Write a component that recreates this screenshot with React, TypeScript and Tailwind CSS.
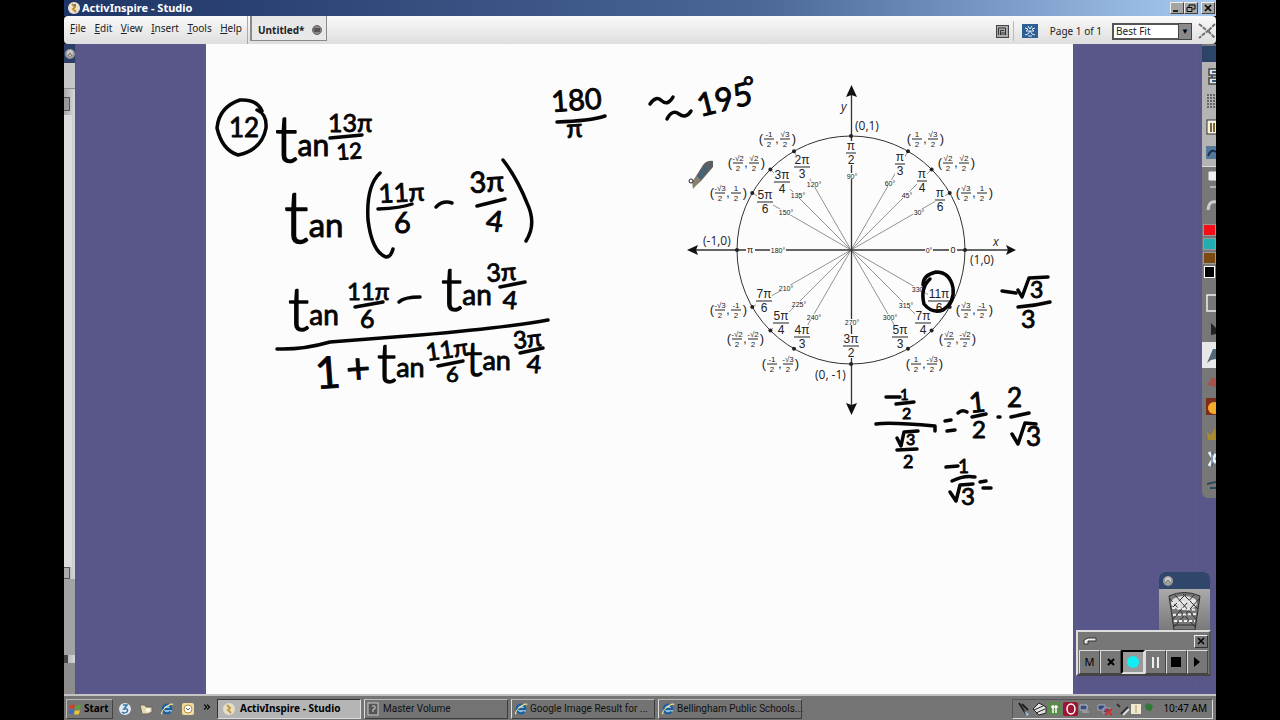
import type { ReactNode } from "react";
import { ChevronsRight } from "lucide-react";

type Glyph = { x: number; y: number; size: number; text: string; turn?: number };
type Fraction = { x: number; y: number; top: string; bottom: string };

const menus = ["File", "Edit", "View", "Insert", "Tools", "Help"];

// centre of the unit circle and its radius on the page
const CX = 851;
const CY = 250;
const R = 114;

const spokes = [30, 45, 60, 120, 135, 150, 210, 225, 240, 300, 315, 330];
const dots = [0, 90, 180, 270, ...spokes];

const degrees = [
  { x: 919, y: 212, text: "30°" },
  { x: 907, y: 195, text: "45°" },
  { x: 890, y: 183, text: "60°" },
  { x: 852, y: 176, text: "90°" },
  { x: 814, y: 184, text: "120°" },
  { x: 798, y: 195, text: "135°" },
  { x: 786, y: 212, text: "150°" },
  { x: 778, y: 250, text: "180°" },
  { x: 786, y: 288, text: "210°" },
  { x: 799, y: 304, text: "225°" },
  { x: 814, y: 317, text: "240°" },
  { x: 852, y: 322, text: "270°" },
  { x: 890, y: 317, text: "300°" },
  { x: 906, y: 305, text: "315°" },
  { x: 919, y: 289, text: "330°" },
  { x: 929, y: 250, text: "0°" },
];

const radians: Fraction[] = [
  { x: 940, y: 200, top: "π", bottom: "6" },
  { x: 922, y: 181, top: "π", bottom: "4" },
  { x: 900, y: 164, top: "π", bottom: "3" },
  { x: 851, y: 153, top: "π", bottom: "2" },
  { x: 802, y: 167, top: "2π", bottom: "3" },
  { x: 782, y: 182, top: "3π", bottom: "4" },
  { x: 765, y: 202, top: "5π", bottom: "6" },
  { x: 764, y: 301, top: "7π", bottom: "6" },
  { x: 781, y: 323, top: "5π", bottom: "4" },
  { x: 802, y: 337, top: "4π", bottom: "3" },
  { x: 851, y: 346, top: "3π", bottom: "2" },
  { x: 900, y: 337, top: "5π", bottom: "3" },
  { x: 923, y: 323, top: "7π", bottom: "4" },
  { x: 939, y: 301, top: "11π", bottom: "6" },
];

const points = [
  { x: 925, y: 139, a: "1", b: "√3" },
  { x: 956, y: 163, a: "√2", b: "√2" },
  { x: 974, y: 193, a: "√3", b: "1" },
  { x: 777, y: 139, a: "-1", b: "√3" },
  { x: 746, y: 163, a: "-√2", b: "√2" },
  { x: 728, y: 193, a: "-√3", b: "1" },
  { x: 728, y: 310, a: "-√3", b: "-1" },
  { x: 745, y: 339, a: "-√2", b: "-√2" },
  { x: 780, y: 364, a: "-1", b: "-√3" },
  { x: 924, y: 364, a: "1", b: "-√3" },
  { x: 957, y: 339, a: "√2", b: "-√2" },
  { x: 974, y: 310, a: "√3", b: "-1" },
];

const ink: Glyph[] = [
  { x: 229, y: 137, size: 26, text: "12" },
  { x: 328, y: 132, size: 25, text: "13π" },
  { x: 337, y: 160, size: 22, text: "12", turn: -4 },
  { x: 379, y: 203, size: 26, text: "11π", turn: -3 },
  { x: 394, y: 233, size: 29, text: "6" },
  { x: 470, y: 193, size: 29, text: "3π", turn: -3 },
  { x: 485, y: 230, size: 29, text: "4", turn: 8 },
  { x: 347, y: 300, size: 24, text: "11π" },
  { x: 360, y: 328, size: 25, text: "6" },
  { x: 487, y: 282, size: 25, text: "3π", turn: -4 },
  { x: 502, y: 308, size: 25, text: "4", turn: 6 },
  { x: 316, y: 389, size: 44, text: "1", turn: -4 },
  { x: 347, y: 384, size: 42, text: "+", turn: -4 },
  { x: 427, y: 361, size: 24, text: "11π", turn: -8 },
  { x: 446, y: 382, size: 22, text: "6" },
  { x: 514, y: 349, size: 24, text: "3π", turn: -6 },
  { x: 526, y: 372, size: 25, text: "4", turn: 6 },
  { x: 552, y: 112, size: 29, text: "180", turn: -4 },
  { x: 567, y: 138, size: 26, text: "π", turn: -4 },
  { x: 700, y: 117, size: 32, text: "195", turn: -14 },
  { x: 743, y: 96, size: 26, text: "°" },
  { x: 1030, y: 298, size: 23, text: "3" },
  { x: 1021, y: 328, size: 25, text: "3" },
  { x: 900, y: 400, size: 15, text: "1" },
  { x: 902, y: 419, size: 16, text: "2" },
  { x: 906, y: 445, size: 16, text: "3" },
  { x: 903, y: 468, size: 18, text: "2" },
  { x: 970, y: 413, size: 28, text: "1", turn: -6 },
  { x: 972, y: 438, size: 24, text: "2" },
  { x: 1007, y: 407, size: 26, text: "2" },
  { x: 1026, y: 446, size: 26, text: "3" },
  { x: 958, y: 473, size: 19, text: "1" },
  { x: 961, y: 505, size: 24, text: "3" },
];

// bars, brackets, radicals and the rings drawn with the pen
const strokes = [
  "M262 111 Q257 99 240 100 Q219 107 217 128 Q222 150 238 155 Q262 150 266 128 Q267 114 257 110",
  "M330 138 L362 135",
  "M380 173 Q366 186 368 220 Q372 252 386 257 Q391 257 393 249",
  "M503 160 Q517 178 527 203 Q537 224 526 241",
  "M378 209 Q402 208 412 204",
  "M436 207 Q443 200 452 203",
  "M477 206 L505 199",
  "M399 302 Q404 297 420 297",
  "M355 307 L383 302",
  "M500 287 L525 282",
  "M277 349 Q302 350 330 342 L420 335 Q510 327 548 320",
  "M438 366 L463 361",
  "M520 353 L543 348",
  "M557 122 Q590 121 605 116",
  "M650 104 Q656 95 662 101 Q668 106 673 97",
  "M667 119 Q672 109 679 114 Q686 119 691 111",
  "M1002 291 L1016 293",
  "M1018 290 L1022 297 L1029 278 L1048 277",
  "M1018 307 Q1034 306 1050 302",
  "M886 397 L900 397",
  "M896 404 L914 402",
  "M876 424 Q890 422 935 426 V431",
  "M897 438 L901 446 L904 432 L918 431",
  "M897 450 L917 449",
  "M945 421 L951 420 M947 431 L955 430",
  "M958 413 Q962 409 967 412",
  "M972 417 L986 414",
  "M998 417 H1000",
  "M1011 417 L1029 413",
  "M1012 434 L1018 444 L1025 423 L1036 424",
  "M946 467 L958 466",
  "M952 481 Q964 475 975 477",
  "M950 492 L956 501 L960 485 L973 484",
  "M980 482 L986 481 M983 488 L991 488",
  "M930 279 Q920 288 924 304 Q932 314 943 310 Q955 302 953 288 Q950 272 936 272 Q923 275 923 285",
];

const tans = [
  { x: 275, y: 156, size: 30, tall: 66 },
  { x: 284, y: 237, size: 33, tall: 72 },
  { x: 288, y: 325, size: 28, tall: 62 },
  { x: 441, y: 305, size: 28, tall: 62 },
  { x: 377, y: 377, size: 27, tall: 56 },
  { x: 466, y: 370, size: 27, tall: 48 },
];

function CircleFraction({ x, y, top, bottom }: Fraction) {
  const half = top.length * 3 + 2;
  return (
    <g fontSize={12} textAnchor="middle">
      <rect x={x - half} y={y - 12} width={half * 2} height={24} fill="#fdfcfd" />
      <text x={x} y={y - 3}>{top}</text>
      <line x1={x - half} x2={x + half} y1={y} y2={y} stroke="#222" />
      <text x={x} y={y + 11}>{bottom}</text>
    </g>
  );
}

function PointLabel({ x, y, a, b }: { x: number; y: number; a: string; b: string }) {
  return (
    <g textAnchor="middle" fontSize={8}>
      <text x={x - 16} y={y + 4} fontSize={13}>(</text>
      <text x={x - 8} y={y - 2}>{a}</text>
      <line x1={x - 13} x2={x - 3} y1={y} y2={y} stroke="#222" />
      <text x={x - 8} y={y + 8}>2</text>
      <text x={x} y={y + 4} fontSize={12}>,</text>
      <text x={x + 8} y={y - 2}>{b}</text>
      <line x1={x + 3} x2={x + 13} y1={y} y2={y} stroke="#222" />
      <text x={x + 8} y={y + 8}>2</text>
      <text x={x + 17} y={y + 4} fontSize={13}>)</text>
    </g>
  );
}

function onCircle(deg: number) {
  const rad = (deg * Math.PI) / 180;
  return { x: CX + R * Math.cos(rad), y: CY - R * Math.sin(rad) };
}

function UnitCircle() {
  return (
    <g className="font-['Liberation_Sans','DejaVu_Sans',sans-serif]" fill="#222">
      {spokes.map((deg) => {
        const p = onCircle(deg);
        return <line key={deg} x1={CX} y1={CY} x2={p.x} y2={p.y} stroke="#777" strokeWidth={0.8} />;
      })}
      <path d="M696 250 H1008 M851.500 94 V406" stroke="#333" strokeWidth={1.3} fill="none" />
      <path d="M687 250 L698 245 L696 250 L698 255 Z M1016 250 L1006 245 L1008 250 L1006 255 Z M851.500 85 L846 97 L851.500 95 L857 97 Z M851.500 415 L846 403 L851.500 405 L857 403 Z" fill="#111" />
      {radians.map((r) => (
        <CircleFraction key={`${r.x}-${r.y}`} {...r} />
      ))}
      {degrees.map((d) => (
        <g key={d.text} fontSize={7} textAnchor="middle">
          <rect x={d.x - d.text.length * 2} y={d.y - 3} width={d.text.length * 4} height={6} fill="#fdfcfd" />
          <text x={d.x} y={d.y + 3}>{d.text}</text>
        </g>
      ))}
      <circle cx={CX} cy={CY} r={R} fill="none" stroke="#333" />
      {dots.map((deg) => {
        const p = onCircle(deg);
        return <circle key={deg} cx={p.x} cy={p.y} r={2} />;
      })}
      {points.map((p) => (
        <PointLabel key={`${p.x}-${p.y}`} {...p} />
      ))}
      <g fontSize={9} textAnchor="middle">
        <rect x={746} y={246} width={9} height={8} fill="#fdfcfd" />
        <text x={750} y={253}>π</text>
        <rect x={949} y={246} width={8} height={8} fill="#fdfcfd" />
        <text x={953} y={253}>0</text>
      </g>
      <g fontSize={12} className="font-['Open_Sans',sans-serif]">
        <text x={855} y={130}>(0,1)</text>
        <text x={703} y={245}>(-1,0)</text>
        <text x={970} y={264}>(1,0)</text>
        <text x={815} y={379}>(0, -1)</text>
        <text x={841} y={111} fontStyle="italic">y</text>
        <text x={993} y={246} fontStyle="italic">x</text>
      </g>
    </g>
  );
}

function Flipchart() {
  return (
    <svg viewBox="206 44 867 650" className="block w-full bg-[#fdfcfd]" role="img" aria-label="Flipchart page">
      <UnitCircle />
      <g
        className="font-['Lato','DejaVu_Sans',sans-serif]"
        fill="#050505"
        stroke="#050505"
        strokeWidth={0.9}
        strokeLinejoin="round"
      >
        {tans.map((t) => (
          <text key={`${t.x}-${t.y}`} x={t.x} y={t.y + 6} fontSize={t.size}>
            <tspan fontSize={t.tall} fontWeight={300} strokeWidth={1.6}>t</tspan>
            <tspan dy={-6}>an</tspan>
          </text>
        ))}
        {ink.map((g) => (
          <text
            key={`${g.x}-${g.y}`}
            x={g.x}
            y={g.y}
            fontSize={g.size}
            transform={g.turn ? `rotate(${g.turn} ${g.x} ${g.y})` : undefined}
          >
            {g.text}
          </text>
        ))}
      </g>
      <g fill="none" stroke="#050505" strokeWidth={3.5} strokeLinecap="round" strokeLinejoin="round">
        {strokes.map((d) => (
          <path key={d} d={d} />
        ))}
      </g>
      {/* pen cursor */}
      <path d="M693 188 L693 181 L703 165 Q707 160 713 161 L713 167 L701 181 Z" fill="#5c5e60" />
      <path d="M693 189 L692 182 L697 176 L701 180 Z" fill="#8a8270" />
      <path d="M699 178 L706 167" stroke="#3b6580" strokeWidth={3} />
      <circle cx={691} cy={181} r={2} fill="#fff" stroke="#222" />
    </svg>
  );
}

function WindowButton({ label, children }: { label: string; children: ReactNode }) {
  return (
    <button
      aria-label={label}
      className="flex h-3 w-[14px] items-center justify-center border border-t-[#eee] border-r-[#444] border-b-[#444] border-l-[#eee] bg-[#a5a5a5]"
    >
      <svg viewBox="0 0 10 8" className="h-2 w-[10px]" fill="none" stroke="#000" strokeWidth={1.6}>
        {children}
      </svg>
    </button>
  );
}

function RoundPin() {
  return (
    <svg viewBox="0 0 12 12" className="size-3 shrink-0">
      <circle cx={6} cy={6} r={5} fill="#9b9b9b" />
      <circle cx={6} cy={5} r={3} fill="#c9c9c9" />
      <path d="M4 8 L6 5 L8 8" stroke="#666" fill="none" />
    </svg>
  );
}

function TitleBar() {
  return (
    <header className="flex h-4 items-center bg-linear-to-r from-[#1f3566] via-[#4a6796] via-60% to-[#a9cbf2] pr-px pl-[3px]">
      <svg viewBox="0 0 14 14" className="mr-px size-[14px]">
        <circle cx={7} cy={7} r={6} fill="#e9e4d4" />
        <path d="M5 3 L8 6 L6 8 L9 11" stroke="#c98a2c" strokeWidth={2} fill="none" />
        <circle cx={8} cy={4} r={1} fill="#555" />
      </svg>
      <h1 className="text-[11px] leading-4 font-bold text-white">ActivInspire - Studio</h1>
      <div className="ml-auto flex">
        <WindowButton label="Minimize">
          <path d="M1 7 H6" />
        </WindowButton>
        <WindowButton label="Restore">
          <path d="M3 3 V1 H9 V5 H7 M1 3.500 H6 V7.500 H1 Z" strokeWidth={1} />
        </WindowButton>
        <span className="w-[3px]" />
        <WindowButton label="Close">
          <path d="M2 1 L8 7 M8 1 L2 7" />
        </WindowButton>
      </div>
    </header>
  );
}

function MenuBar() {
  return (
    <div className="flex h-7 items-stretch rounded-sm bg-linear-to-b from-[#fafafa] to-[#dedede] text-[#222]">
      <nav className="flex w-[184px] items-start justify-between border-r border-[#aaa] pt-1 pr-[5px] pl-[6px]">
        {menus.map((m) => (
          <button key={m} className="text-[10px] leading-4">
            <span className="underline">{m[0]}</span>
            {m.slice(1)}
          </button>
        ))}
      </nav>
      <div className="ml-[2px] flex h-[25px] w-[77px] items-center justify-between border-r border-b border-l-2 border-[#8a8a8a] bg-[#e8e8e8] pt-1 pr-1 pl-[6px] text-[10px] font-bold">
        <span>Untitled*</span>
        <button aria-label="Close Untitled" className="flex size-[10px] items-center justify-center rounded-full border border-[#666] bg-[#888]">
          <span className="h-1 w-[6px] bg-[#555]" />
        </button>
      </div>
      <div className="ml-auto flex items-center pt-[2px] text-[10px]">
        <button aria-label="Notes" className="flex size-[13px] items-center justify-center border border-[#444] bg-[#aaa]">
          <svg viewBox="0 0 10 10" className="size-[10px]" fill="none" stroke="#333">
            <path d="M1.500 9 V2 H8.500 V9 M3.500 9 V4.500 H7 M5 6 V9 M7 6 V9" />
          </svg>
        </button>
        <span className="mx-1 h-5 w-px bg-[#bbb]" />
        <button aria-label="Desktop annotate" className="ml-1 flex h-[14px] w-4 items-center justify-center bg-[#2d5e94]">
          <svg viewBox="0 0 14 12" className="h-3 w-[14px]" fill="none" stroke="#e0edf7">
            <path d="M2 3 L5 4 L3 6 H11 L9 4 L12 3 M2 10 L5 9 L7 6 L9 9 L12 10 M5 1 L7 4 L9 1 M5 11 H9" />
          </svg>
        </button>
        <span className="mr-[10px] ml-3">Page 1 of 1</span>
        <select
          aria-label="Zoom"
          defaultValue="Best Fit"
          className="h-[17px] w-[66px] appearance-none border-2 border-r-0 border-[#555] bg-white pl-[2px] text-[10px] leading-3"
        >
          <option>Best Fit</option>
        </select>
        <span className="flex h-[17px] w-[14px] items-center justify-center border border-[#444] bg-[#8a8a8a] text-[8px] text-black">▼</span>
        <button aria-label="Collapse" className="ml-[6px]">
          <svg viewBox="0 0 18 16" className="h-4 w-[18px]" fill="none" stroke="#707070" strokeWidth={2}>
            <path d="M1 1 L7 6 L10 8 L7 10 L1 15" strokeDasharray="4 1" />
            <path d="M17 1 L12 6 L10 8 L12 10 L17 15" strokeDasharray="4 1" />
          </svg>
        </button>
      </div>
    </div>
  );
}

function LeftTools() {
  return (
    <aside className="flex w-3 flex-col border-r border-[#55577c] bg-linear-to-r from-[#a9a9a9] to-[#d8d8d8]">
      <div className="flex h-[19px] items-center bg-[#2c3f66]">
        <RoundPin />
      </div>
      <div className="h-[26px] border-b border-[#8e8e8e] bg-[#c6c6c6]" />
      <button aria-label="Page browser" className="mt-2 h-[14px] w-[6px] border border-l-0 border-[#555] bg-[#999]" />
      <div className="mt-1 w-2 flex-1 bg-[#dcdcdc]" />
      <button aria-label="Scroll down" className="h-3 w-[6px] border border-l-0 border-[#555] bg-[#aaa]" />
      <div className="h-[76px] bg-[#a3a3a3]" />
      <div className="h-2 w-1 bg-[#444]" />
      <div className="h-[31px] bg-[#8d8d8d]" />
    </aside>
  );
}

function ToolButton({ label, children }: { label: string; children: ReactNode }) {
  return (
    <button aria-label={label} className="flex h-[26px] w-[14px] items-center overflow-hidden pl-1">
      <svg viewBox="0 0 10 20" className="h-5 w-[10px] shrink-0">{children}</svg>
    </button>
  );
}

function RightTools() {
  return (
    <aside className="flex w-[14px] flex-col self-start rounded-bl-md bg-[#777]">
      <div className="mt-[2px] h-4 bg-[#2c4468]" />
      <div className="flex flex-col border-b border-[#ddd] bg-[#b4b4b4]">
        <ToolButton label="Switch profile">
          <path d="M10 4 H3 V10 H10 M10 13 H3 V19 H10" fill="#e8e8e8" stroke="#444" strokeWidth={1.5} />
          <path d="M6 7 H10 M6 16 H10 M6 10 V13" stroke="#3c5675" strokeWidth={2} />
        </ToolButton>
        <ToolButton label="Keyboard">
          <path d="M1 4 H10 M1 7 H10 M1 10 H10 M1 13 H10 M1 16 H10" stroke="#666" strokeWidth={2} strokeDasharray="2 1" />
        </ToolButton>
        <ToolButton label="Users">
          <rect x={1} y={3} width={10} height={14} fill="#f5f2e6" stroke="#333" />
          <path d="M5 6 V15 M8 6 V15" stroke="#7b6430" strokeWidth={2} />
        </ToolButton>
        <ToolButton label="Desktop">
          <rect y={3} width={12} height={13} fill="#54799b" />
          <path d="M2 13 Q5 5 10 9" stroke="#16324c" strokeWidth={2} fill="none" />
        </ToolButton>
      </div>
      <ToolButton label="Copy">
        <path d="M3 2 H10 V10 H3 Z M4 17 H10" fill="#eee" stroke="#eee" />
      </ToolButton>
      <ToolButton label="Undo">
        <path d="M2 14 Q3 4 10 6" stroke="#ccc" strokeWidth={3} fill="none" />
      </ToolButton>
      <div className="mt-[5px] flex flex-col gap-[2px] pl-px">
        <button aria-label="Red" className="h-3 w-[13px] border border-[#999] bg-[#f40f18]" />
        <button aria-label="Teal" className="h-3 w-[13px] border border-[#999] bg-[#23adb3]" />
        <button aria-label="Brown" className="h-3 w-[13px] border border-[#999] bg-[#7b4a12]" />
        <button aria-label="Black" className="ml-px h-3 w-[11px] border border-white bg-black" />
      </div>
      <div className="mt-3 flex flex-col">
        <ToolButton label="Pen width">
          <path d="M10 2 H1 V18 H10" fill="#777" stroke="#eee" strokeWidth={1.5} />
        </ToolButton>
        <ToolButton label="Select">
          <path d="M5 4 L10 9 V15 L5 16 Z" fill="#222" />
        </ToolButton>
        <button aria-label="Pen" className="flex h-[26px] items-center bg-[#e8e8e8] pl-1">
          <svg viewBox="0 0 10 20" className="h-5 w-[10px]">
            <path d="M1 18 L7 4 H10 V14 L5 15 Z" fill="#50687a" />
          </svg>
        </button>
        <ToolButton label="Highlighter">
          <path d="M1 14 L6 6 L10 8 V16 Z" fill="#a4544c" />
        </ToolButton>
        <ToolButton label="Fill">
          <rect y={1} width={10} height={17} fill="#7d2e1b" />
          <circle cx={8} cy={11} r={6} fill="#f4ab2a" />
        </ToolButton>
        <ToolButton label="Clear">
          <path d="M1 9 L5 12 L9 5 L10 17 H2 Z" fill="#a98a31" />
        </ToolButton>
        <ToolButton label="Text">
          <path d="M3 3 L10 14 M3 17 L10 5" stroke="#e4eef5" strokeWidth={3} />
          <path d="M6 3 V17" stroke="#284a66" />
        </ToolButton>
        <ToolButton label="Connector">
          <path d="M1 9 L10 7 M4 13 H10" stroke="#2c4a5e" strokeWidth={2} />
        </ToolButton>
      </div>
    </aside>
  );
}

function TrashWindow() {
  return (
    <div className="absolute right-[6px] bottom-[62px] w-[51px] rounded-t-md bg-[#8c8c8c]">
      <div className="flex h-[17px] items-center rounded-t-md bg-[#30466b] pl-[3px]">
        <RoundPin />
      </div>
      <svg viewBox="0 0 51 43" className="block w-full bg-linear-to-b from-[#aaa] to-[#777]">
        <path d="M10 7 Q25 0 41 7 L36 41 H15 Z" fill="#777" stroke="#2e2e2e" />
        <ellipse cx={25} cy={14} rx={13} ry={7} fill="#ddd" />
        <path
          d="M11 10 L36 38 M16 6 L37 30 M24 5 L39 20 M40 10 L15 38 M35 6 L14 30 M27 5 L12 20 M14 36 H37"
          stroke="#333"
          fill="none"
        />
        <path d="M13 14 L38 12 M13 19 L38 21 M14 26 L37 25 M15 32 H36" stroke="#eee" strokeWidth={2} strokeDasharray="3 2" />
      </svg>
    </div>
  );
}

function Recorder() {
  const cell = "flex h-6 flex-1 items-center justify-center border border-t-[#ddd] border-r-[#444] border-b-[#444] border-l-[#ddd] bg-[#777]";
  return (
    <div className="absolute right-[5px] bottom-[18px] w-[135px] border-2 border-t-[#ddd] border-r-[#555] border-b-[#444] border-l-[#ddd] bg-[#777] px-px">
      <div className="flex h-[18px] items-center justify-between pl-1">
        <svg viewBox="0 0 14 8" className="h-2 w-[14px]">
          <path d="M1 3 L5 1 H13 V4 H5 V7 H1 Z" fill="#eee" stroke="#333" />
        </svg>
        <button aria-label="Close recorder" className="flex h-[13px] w-[14px] items-center justify-center border border-t-[#eee] border-r-[#333] border-b-[#333] border-l-[#eee]">
          <svg viewBox="0 0 8 8" className="size-2" stroke="#000" strokeWidth={1.5}>
            <path d="M1 1 L7 7 M7 1 L1 7" />
          </svg>
        </button>
      </div>
      <div className="flex">
        <button className={`${cell} text-[11px]`}>M</button>
        <button aria-label="Discard" className={cell}>
          <svg viewBox="0 0 8 8" className="size-2" stroke="#000" strokeWidth={2}>
            <path d="M1 1 L7 7 M7 1 L1 7" />
          </svg>
        </button>
        <button aria-label="Record" className="flex h-6 flex-1 items-center justify-center border-2 border-t-black border-r-[#ddd] border-b-[#ddd] border-l-black bg-[#999]">
          <span className="size-3 rounded-full bg-[#10eef5]" />
        </button>
        <button aria-label="Pause" className={cell}>
          <span className="h-[11px] w-[7px] border-x-2 border-[#eee]" />
        </button>
        <button aria-label="Stop" className={cell}>
          <span className="size-[10px] bg-black" />
        </button>
        <button aria-label="Play" className={cell}>
          <svg viewBox="0 0 6 10" className="h-[10px] w-[6px]">
            <path d="M0 0 L6 5 L0 10 Z" />
          </svg>
        </button>
      </div>
    </div>
  );
}

function ExplorerIcon() {
  return (
    <svg viewBox="0 0 16 16" className="size-[14px] shrink-0" fill="none">
      <circle cx={8} cy={8} r={6} fill="#8cb9dc" />
      <path d="M12 11 A5 5 0 1 1 13 8 H4" stroke="#1c5c9c" strokeWidth={2.4} />
      <path d="M2 14 Q1 10 8 5 Q14 1 15 3" stroke="#eddb8c" strokeWidth={1.4} />
    </svg>
  );
}

function TaskButton({ icon, children }: { icon: ReactNode; children: ReactNode }) {
  return (
    <button className="flex h-5 w-[144px] min-w-0 items-center gap-[2px] border border-t-[#bbb] border-r-[#3c3c3c] border-b-[#3c3c3c] border-l-[#ddd] bg-[#737373] pl-[2px] font-['Roboto',sans-serif] text-[10px] text-[#111]">
      {icon}
      <span className="whitespace-nowrap">{children}</span>
    </button>
  );
}

function Taskbar() {
  return (
    <footer className="flex h-[26px] items-center border-t-2 border-[#c4c4c4] bg-[#757575] pt-px pr-[3px] pl-[2px] text-[10px] text-black">
      <button className="flex h-5 w-[47px] items-center gap-[3px] border border-t-[#bbb] border-r-[#444] border-b-[#444] border-l-[#bbb] pl-[2px] text-[10px] font-bold">
        <svg viewBox="0 0 12 12" className="size-3 shrink-0">
          <path d="M1 2 Q3 1 6 2 L5 6 Q3 5 0 6 Z" fill="#c8452f" />
          <path d="M7 2 Q9 3 12 2 L11 6 Q8 7 6 6 Z" fill="#5aa63b" />
          <path d="M0 7 Q3 6 5 7 L4 11 Q2 10 0 11 Z" fill="#3b6cc2" />
          <path d="M6 7 Q8 8 11 7 L10 11 Q7 12 5 11 Z" fill="#e8c436" />
        </svg>
        Start
      </button>
      <div className="ml-[5px] flex items-center gap-[7px]">
        <svg viewBox="0 0 14 14" className="size-[14px]">
          <circle cx={7} cy={7} r={6} fill="#dfe9ef" />
          <path d="M5 3 H9 L6 7 Q11 6 9 10 Q6 12 4 10" stroke="#3678a4" strokeWidth={1.5} fill="none" />
        </svg>
        <svg viewBox="0 0 14 14" className="size-[14px]">
          <path d="M1 3 H6 L7 5 H13 V10 L9 12 H3 Z" fill="#e6dba8" stroke="#666" />
          <circle cx={9} cy={8} r={2} fill="#f8f8f8" />
        </svg>
        <ExplorerIcon />
        <svg viewBox="0 0 14 14" className="size-[14px]">
          <rect x={1} y={1} width={12} height={12} rx={2} fill="#eedc9f" />
          <circle cx={7} cy={7} r={4} fill="#fff" stroke="#b28a31" />
          <path d="M5 6 L7 8 L9 6" stroke="#555" fill="none" />
        </svg>
        <ChevronsRight className="size-[10px] self-start" color="#000" strokeWidth={3} />
      </div>
      <div className="ml-[5px] flex min-w-0 gap-[3px]">
        <button className="flex h-5 w-[144px] items-center gap-1 border border-t-[#333] border-r-[#ddd] border-b-[#ddd] border-l-[#333] bg-[#b5b5b5] pl-1 text-[10px] font-bold">
          <svg viewBox="0 0 14 14" className="size-[14px] shrink-0">
            <circle cx={7} cy={7} r={6} fill="#e6dfc8" />
            <path d="M5 3 L8 6 L6 8 L9 11" stroke="#c5983e" strokeWidth={2} fill="none" />
          </svg>
          <span className="whitespace-nowrap">ActivInspire - Studio</span>
        </button>
        <TaskButton
          icon={
            <svg viewBox="0 0 14 14" className="size-[14px] shrink-0">
              <rect x={1} y={1} width={10} height={12} fill="#555" stroke="#ccc" />
              <path d="M5 4 H8 V7 H6 V10" stroke="#ccc" fill="none" />
            </svg>
          }
        >
          Master Volume
        </TaskButton>
        <TaskButton icon={<ExplorerIcon />}>Google Image Result for ...</TaskButton>
        <TaskButton icon={<ExplorerIcon />}>Bellingham Public Schools...</TaskButton>
      </div>
      <div className="ml-auto flex h-5 w-[201px] shrink-0 items-center border border-t-[#555] border-r-[#ddd] border-b-[#ddd] border-l-[#555] pr-[5px] pl-1">
        <svg viewBox="0 0 140 16" className="h-4 w-[140px]">
          <path d="M2 2 L9 13 M5 3 L11 9" stroke="#222" strokeWidth={2} />
          <path d="M7 10 L12 13 L10 15 Z" fill="#9cc7dd" />
          <path d="M16 8 L22 2 L29 6 V12 L22 14 Z" fill="#e5e5e5" stroke="#222" />
          <path d="M17 9 L26 5 M19 12 L28 8" stroke="#222" />
          <rect x={31} y={1} width={13} height={13} fill="#5c8a4c" />
          <path d="M36 4 V12 M39 4 V12 M34 6 H41" stroke="#fff" strokeWidth={1.5} />
          <rect x={46} y={1} width={15} height={14} rx={2} fill="#9c1631" />
          <ellipse cx={54} cy={8} rx={4} ry={5} fill="none" stroke="#fff" strokeWidth={1.5} />
          <path d="M63 4 H70 V9 H63 Z M65 11 H72" fill="#384f7d" stroke="#bbc" />
          <path d="M81 4 H88 V9 H81 Z M86 7 H93 V12 H86 Z" fill="#304a80" stroke="#aab" />
          <path d="M88 8 L95 14 M95 8 L88 14" stroke="#d22c25" strokeWidth={2} />
          <path d="M100 3 L103 6 M104 13 L111 6" stroke="#333" strokeWidth={2} />
          <path d="M106 14 L112 8" stroke="#ddd" strokeWidth={2} />
          <rect x={114} y={3} width={10} height={10} fill="#f2ead0" />
          <path d="M119 4 V12" stroke="#b19a56" />
          <path d="M128 4 L132 2 L136 5 L134 10 L129 9 Z" fill="#2f7936" />
        </svg>
        <time className="ml-auto whitespace-nowrap">10:47 AM</time>
      </div>
    </footer>
  );
}

export default function App() {
  return (
    <div className="min-h-screen bg-black px-[5%] font-['Noto_Sans','Liberation_Sans',sans-serif]">
      <div className="flex min-h-screen flex-col">
        <TitleBar />
        <MenuBar />
        <main className="relative flex flex-1 bg-[#595689]">
          <div className="flex w-[142px] shrink-0">
            <LeftTools />
            <div className="ml-[3px] flex-1 border-x-2 border-t-2 border-[#5b588f]" />
          </div>
          <div className="min-w-0 flex-1 bg-[#fdfcfd]">
            <Flipchart />
          </div>
          <div className="flex w-[143px] shrink-0">
            <div className="mr-1 ml-[2px] flex-1 border-x-2 border-t-2 border-[#5b588f]" />
            <RightTools />
          </div>
          <TrashWindow />
          <Recorder />
        </main>
        <Taskbar />
      </div>
    </div>
  );
}
